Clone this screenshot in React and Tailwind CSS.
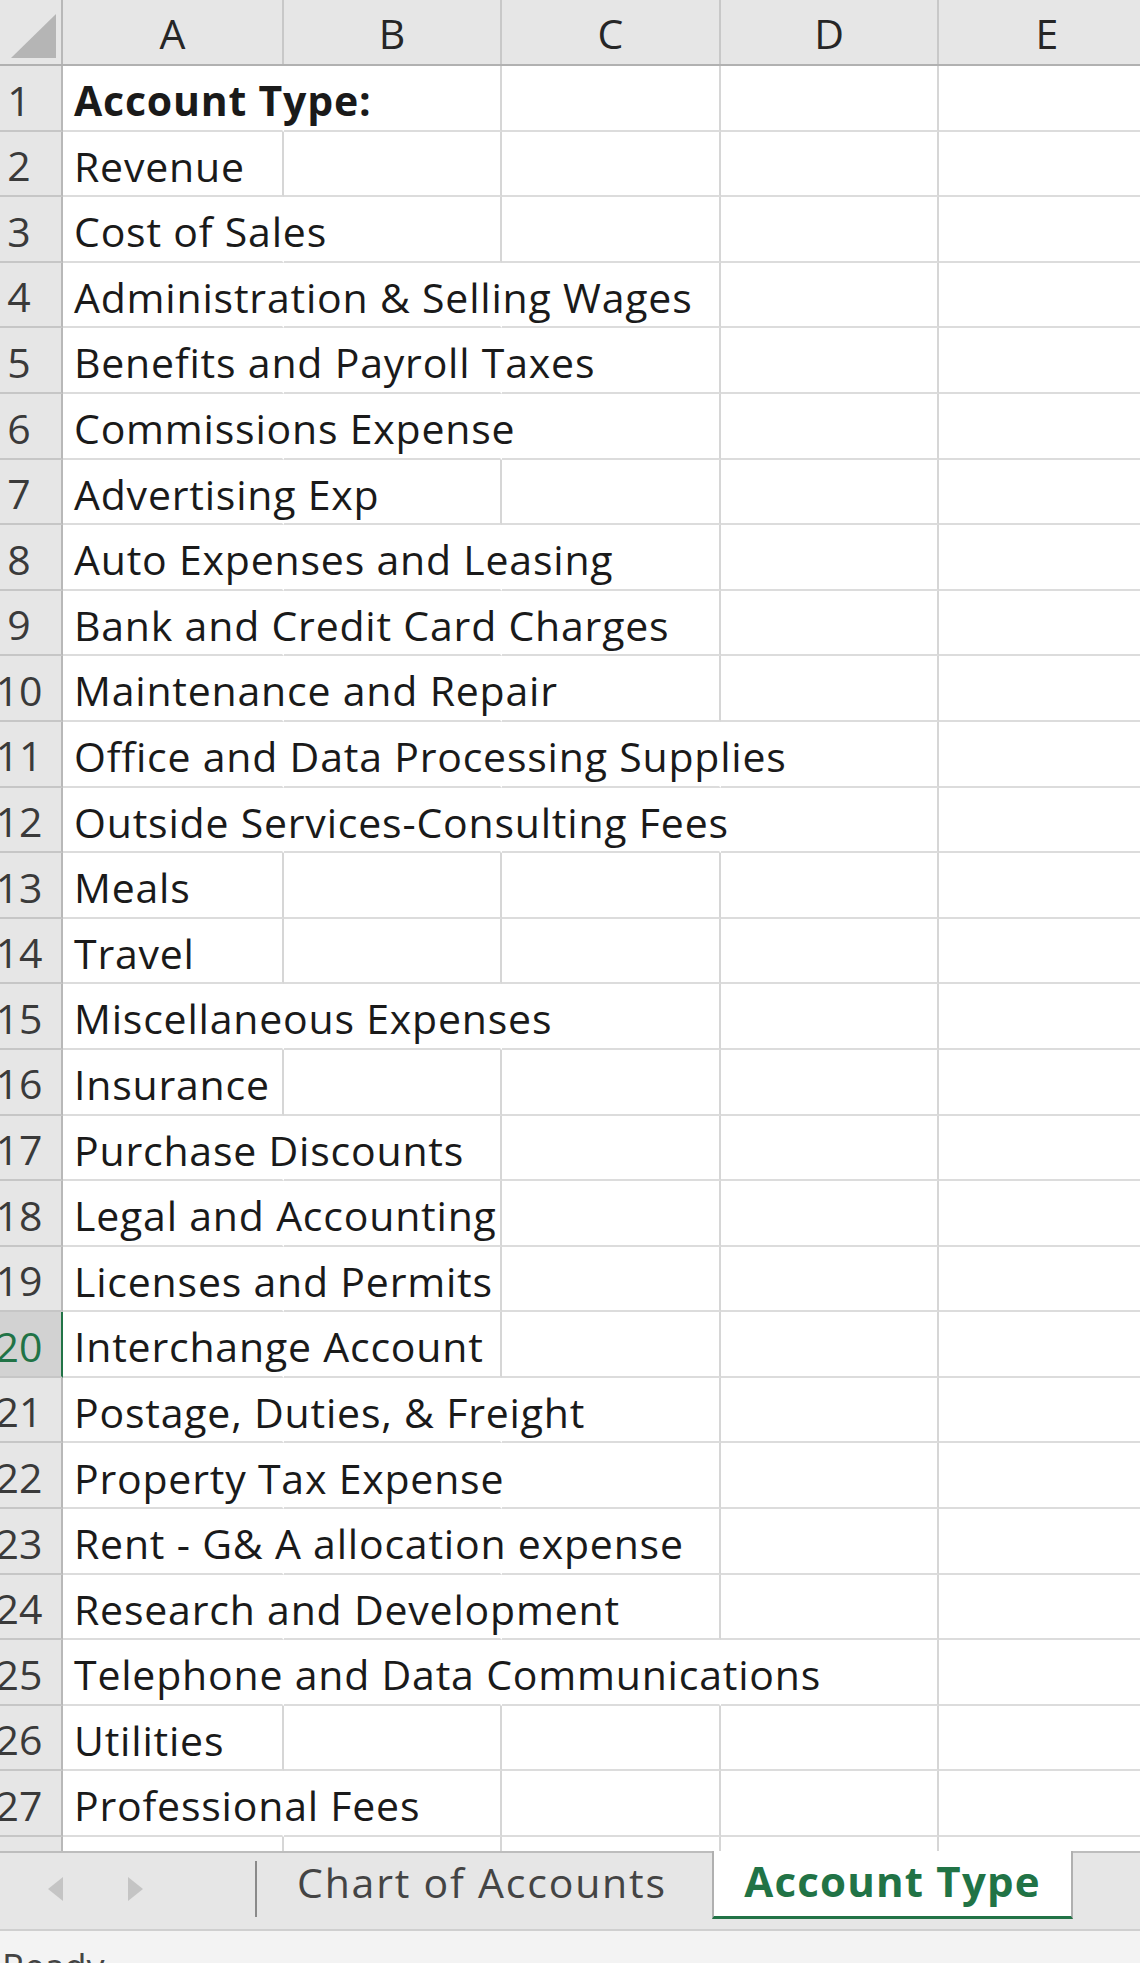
const ROWS = [
  { text: "Account Type:", bold: true, span: 2 },
  { text: "Revenue", span: 1 },
  { text: "Cost of Sales", span: 2 },
  { text: "Administration & Selling Wages", span: 3 },
  { text: "Benefits and Payroll Taxes", span: 3 },
  { text: "Commissions Expense", span: 3 },
  { text: "Advertising Exp", span: 2 },
  { text: "Auto Expenses and Leasing", span: 3 },
  { text: "Bank and Credit Card Charges", span: 3 },
  { text: "Maintenance and Repair", span: 3 },
  { text: "Office and Data Processing Supplies", span: 4 },
  { text: "Outside Services-Consulting Fees", span: 4 },
  { text: "Meals", span: 1 },
  { text: "Travel", span: 1 },
  { text: "Miscellaneous Expenses", span: 3 },
  { text: "Insurance", span: 1 },
  { text: "Purchase Discounts", span: 2 },
  { text: "Legal and Accounting", span: 2 },
  { text: "Licenses and Permits", span: 2 },
  { text: "Interchange Account", span: 2 },
  { text: "Postage, Duties, & Freight", span: 3 },
  { text: "Property Tax Expense", span: 3 },
  { text: "Rent - G& A allocation expense", span: 3 },
  { text: "Research and Development", span: 3 },
  { text: "Telephone and Data Communications", span: 4 },
  { text: "Utilities", span: 1 },
  { text: "Professional Fees", span: 2 },
]

const COLS = [
  { label: "A", w: "w-[221px]" },
  { label: "B", w: "w-[218px]" },
  { label: "C", w: "w-[219px]" },
  { label: "D", w: "w-[218px]" },
  { label: "E", w: "w-[218px]" },
]

const font = { fontFamily: "'Open Sans', 'Liberation Sans', sans-serif" }

function ColumnHeader() {
  return (
    <div className="flex h-[66px] shrink-0 bg-[#e6e6e6] border-b-2 border-[#b1b1b1]">
      <div className="relative w-[63px] shrink-0 border-r-2 border-[#b8b8b8]">
        <svg className="absolute left-[11px] top-[14px]" width="45" height="44" viewBox="0 0 45 44">
          <polygon points="45,0 45,44 0,44" fill="#b5b5b5" />
        </svg>
      </div>
      {COLS.map(c => (
        <div
          key={c.label}
          className={`${c.w} shrink-0 flex items-center justify-center border-r-2 border-[#c8c8c8] text-[41px] text-[#262626] pt-[3px]`}
        >
          {c.label}
        </div>
      ))}
    </div>
  )
}

function Row({ n, row, selected }) {
  return (
    <div className="flex h-[65.6px] shrink-0">
      <div
        className={`relative w-[63px] shrink-0 border-b-2 border-r-2 ${
          selected ? "bg-[#d2d2d2] border-r-[#217346] text-[#217346]" : "bg-[#e6e6e6] border-r-[#b8b8b8] text-[#3a3a3a]"
        } border-b-[#c6c6c6]`}
      >
        <div className="w-[38px] h-full flex items-center justify-center text-[41px] pt-[5px] whitespace-nowrap">
          {n}
        </div>
      </div>
      {COLS.map((c, i) => (
        <div
          key={c.label}
          className={`${c.w} shrink-0 border-b-2 border-[#dcdcdc] ${
            i < row.span - 1 ? "border-r-2 border-r-transparent" : "border-r-2 border-r-[#d6d6d6]"
          } flex items-center pt-[6px]`}
        >
          {i === 0 && (
            <span
              className={`pl-[11px] whitespace-nowrap text-[41px] tracking-[0.8px] text-[#1a1a1a] ${row.bold ? "font-bold" : ""}`}
            >
              {row.text}
            </span>
          )}
        </div>
      ))}
    </div>
  )
}

function TabBar() {
  return (
    <div className="relative flex h-[78px] shrink-0 bg-[#e6e6e6] border-t-2 border-[#bdbdbd]">
      <div className="w-[255px] shrink-0 relative">
        <svg className="absolute left-[48px] top-[24px]" width="15" height="24" viewBox="0 0 15 24">
          <polygon points="15,0 15,24 0,12" fill="#c4c4c4" />
        </svg>
        <svg className="absolute left-[128px] top-[24px]" width="15" height="24" viewBox="0 0 15 24">
          <polygon points="0,0 0,24 15,12" fill="#c4c4c4" />
        </svg>
      </div>
      <div className="w-[2px] h-[56px] mt-[8px] bg-[#8a8a8a] shrink-0" />
      <div className="w-[455px] shrink-0 flex items-center pl-[40px] text-[41px] tracking-[1.8px] text-[#444] pb-[16px]">
        Chart of Accounts
      </div>
      <div className="-mt-[2px] w-[361px] h-[68px] shrink-0 bg-white border-x-2 border-[#b0b0b0] border-b-[3px] border-b-[#217346] flex items-center justify-center text-[42px] tracking-[1.2px] font-bold text-[#217346] pb-[6px]">
        Account Type
      </div>
    </div>
  )
}

export default function App() {
  return (
    <div className="w-[1140px] h-[1963px] overflow-hidden bg-white flex flex-col" style={font}>
      <ColumnHeader />
      {ROWS.map((row, i) => (
        <Row key={i} n={i + 1} row={row} selected={i === 19} />
      ))}
      <div className="flex h-[14px] shrink-0 overflow-hidden">
        <div className="w-[63px] shrink-0 bg-[#e6e6e6] border-r-2 border-[#b8b8b8]" />
        <div className="w-[221px] shrink-0 border-r-2 border-[#d6d6d6]" />
        <div className="w-[218px] shrink-0 border-r-2 border-[#d6d6d6]" />
        <div className="w-[219px] shrink-0 border-r-2 border-[#d6d6d6]" />
        <div className="w-[218px] shrink-0 border-r-2 border-[#d6d6d6]" />
      </div>
      <TabBar />
      <div className="flex-1 bg-[#f3f3f3] border-t-2 border-[#cfcfcf] overflow-hidden">
        <div className="pt-[16px] pl-[2px] text-[36px] leading-[40px] text-[#444]">Ready</div>
      </div>
    </div>
  )
}
